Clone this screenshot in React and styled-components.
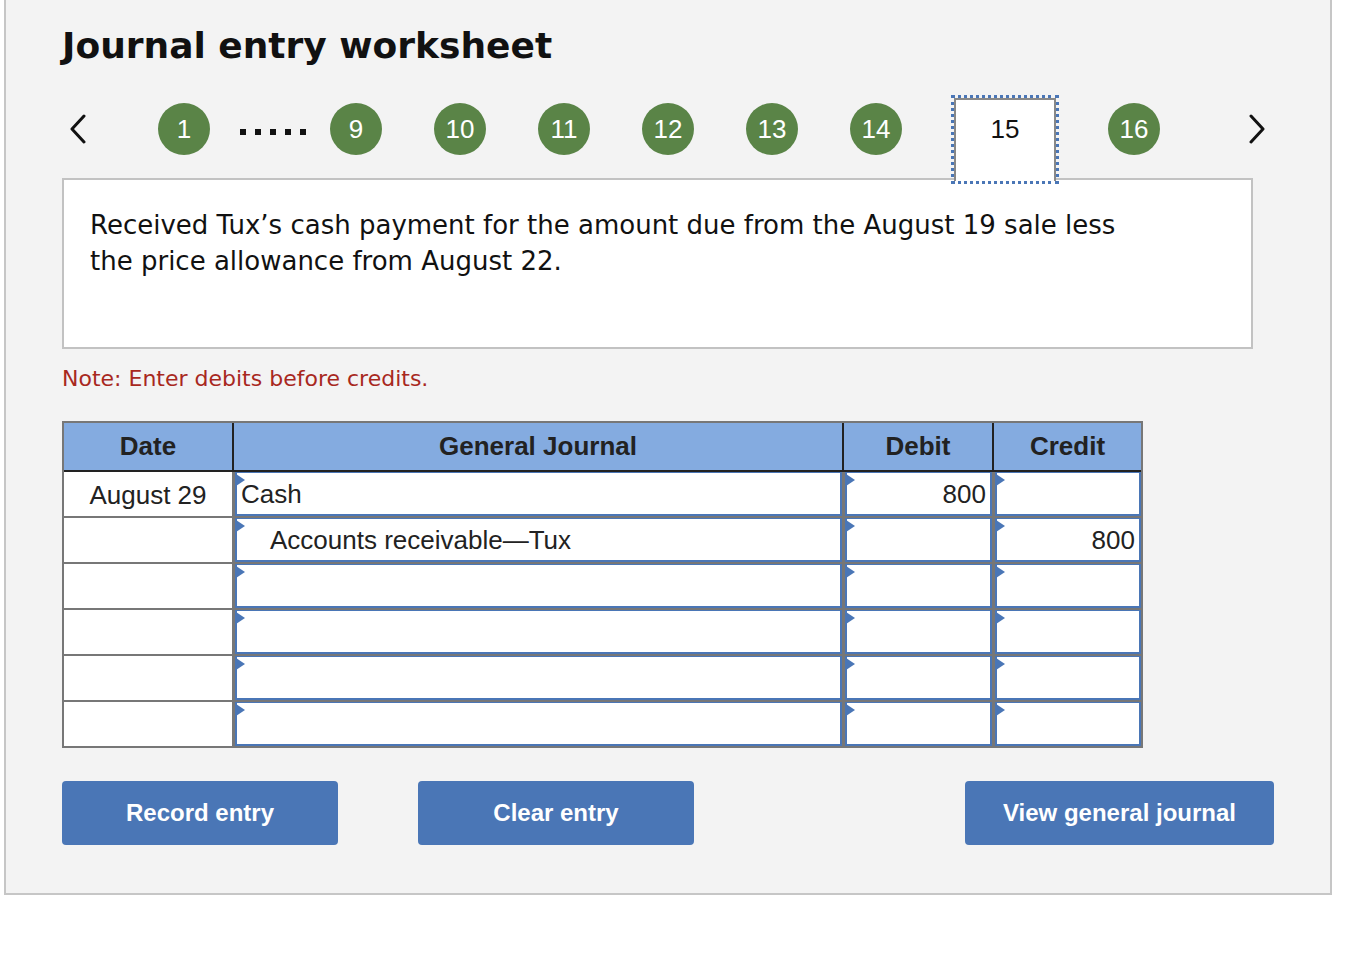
import React from "react";
import styled, { createGlobalStyle } from "styled-components";

const GlobalStyle = createGlobalStyle`
  body {
    margin: 0;
    background: #ffffff;
    font-family: "Liberation Sans", Arial, sans-serif;
  }
`;

const colors = {
  panel: "#f3f3f3",
  panelBorder: "#c6c6c6",
  green: "#5a8447",
  blue: "#4a76b6",
  header: "#84abe0",
  grid: "#777777",
  dark: "#222222",
  note: "#a8281e",
};

const Panel = styled.div`
  margin-left: 4px;
  width: 1324px;
  height: 893px;
  background: ${colors.panel};
  border: 2px solid ${colors.panelBorder};
  border-top: none;
`;

const Inner = styled.div`
  padding: 24px 0 0 56px;
`;

const Title = styled.h1`
  margin: 0;
  font-family: "DejaVu Sans", Verdana, sans-serif;
  font-weight: bold;
  font-size: 36px;
  line-height: 44px;
  color: #111;
`;

const Nav = styled.div`
  display: flex;
  align-items: flex-start;
  margin-top: 30px;
  height: 80px;
`;

const Arrow = styled.button`
  border: none;
  background: none;
  padding: 0;
  width: 24px;
  height: 52px;
  margin-top: 5px;
  margin-left: ${(p) => p.$ml || 0}px;
  display: flex;
  align-items: center;
  justify-content: center;
  cursor: pointer;
`;

const Step = styled.div`
  width: 52px;
  height: 52px;
  margin-top: 5px;
  margin-left: ${(p) => p.$ml}px;
  border-radius: 50%;
  background: ${colors.green};
  color: #fff;
  font-size: 26px;
  display: flex;
  align-items: center;
  justify-content: center;
  flex-shrink: 0;
`;

const Dots = styled.div`
  display: flex;
  gap: 9px;
  margin-left: 30px;
  margin-top: 31px;
  span {
    width: 6px;
    height: 6px;
    background: #111;
  }
`;

const ActiveTab = styled.div`
  position: relative;
  z-index: 1;
  margin-left: ${(p) => p.$ml}px;
  width: 102px;
  height: 83px;
  background: #fff;
  border: 2px solid #888;
  border-bottom: none;
  outline: 3px dotted ${colors.blue};
  outline-offset: 0px;
  font-size: 26px;
  color: #111;
  display: flex;
  justify-content: center;
  padding-top: 14px;
  box-sizing: border-box;
`;

const Prompt = styled.div`
  box-sizing: border-box;
  width: 1191px;
  height: 171px;
  background: #fff;
  border: 2px solid #c2c2c2;
  padding: 27px 26px 0 26px;
  font-family: "DejaVu Sans", Verdana, sans-serif;
  font-size: 26px;
  line-height: 36px;
  color: #111;
`;

const Note = styled.p`
  margin: 16px 0 0;
  font-family: "DejaVu Sans", Verdana, sans-serif;
  font-size: 22px;
  line-height: 28px;
  color: ${colors.note};
`;

const Sheet = styled.div`
  margin-top: 28px;
  width: 1077px;
  border: 2px solid ${colors.grid};
  background: ${colors.grid};
`;

const cols = "168px 608px 148px 147px";

const HeadRow = styled.div`
  display: grid;
  grid-template-columns: ${cols};
  column-gap: 2px;
  background: ${colors.dark};
  border-bottom: 2px solid ${colors.dark};
`;

const HeadCell = styled.div`
  height: 47px;
  background: ${colors.header};
  display: flex;
  align-items: center;
  justify-content: center;
  font-weight: bold;
  font-size: 26px;
  color: ${colors.dark};
`;

const Row = styled.div`
  display: grid;
  grid-template-columns: ${cols};
  column-gap: 2px;
  & + & {
    margin-top: 2px;
  }
`;

const DateCell = styled.div`
  height: 44px;
  background: #fff;
  display: flex;
  align-items: center;
  justify-content: center;
  padding-top: 2px;
  box-sizing: border-box;
  font-size: 26px;
  color: ${colors.dark};
`;

const Entry = styled.div`
  position: relative;
  height: 44px;
  box-sizing: border-box;
  background: #fff;
  border: 2px solid ${colors.blue};
  border-top-width: 1px;
  margin-left: 1px;
  display: flex;
  align-items: center;
  justify-content: ${(p) => (p.$num ? "flex-end" : "flex-start")};
  padding: 2px ${(p) => (p.$num ? 4 : 0)}px 0 ${(p) => (p.$num ? 0 : p.$indent ? 33 : 4)}px;
  font-size: 26px;
  color: ${colors.dark};
`;

const Flag = styled.span`
  position: absolute;
  top: 1px;
  left: -1px;
  width: 0;
  height: 0;
  border-left: 9px solid ${colors.blue};
  border-top: 6px solid transparent;
  border-bottom: 6px solid transparent;
`;

const Actions = styled.div`
  display: flex;
  margin-top: 33px;
`;

const Button = styled.button`
  width: ${(p) => p.$w}px;
  height: 64px;
  margin-left: ${(p) => p.$ml || 0}px;
  border: none;
  border-radius: 4px;
  background: ${colors.blue};
  color: #fff;
  font-family: "Liberation Sans", Arial, sans-serif;
  font-weight: bold;
  font-size: 24px;
  cursor: pointer;
`;

const Chevron = ({ dir }) => (
  <svg width="18" height="30" viewBox="0 0 18 30" fill="none">
    <path
      d={dir === "left" ? "M15 2 L3 15 L15 28" : "M3 2 L15 15 L3 28"}
      stroke="#111"
      strokeWidth="3"
      strokeLinecap="round"
      strokeLinejoin="round"
    />
  </svg>
);

const rows = [
  { date: "August 29", account: "Cash", debit: "800", credit: "" },
  { date: "", account: "Accounts receivable\u2014Tux", indent: true, debit: "", credit: "800" },
  { date: "", account: "", debit: "", credit: "" },
  { date: "", account: "", debit: "", credit: "" },
  { date: "", account: "", debit: "", credit: "" },
  { date: "", account: "", debit: "", credit: "" },
];

export default function App() {
  return (
    <>
      <GlobalStyle />
      <Panel>
        <Inner>
          <Title>Journal entry worksheet</Title>
          <Nav>
            <Arrow $ml={4} aria-label="previous">
              <Chevron dir="left" />
            </Arrow>
            <Step $ml={68}>1</Step>
            <Dots>
              <span />
              <span />
              <span />
              <span />
              <span />
            </Dots>
            <Step $ml={24}>9</Step>
            <Step $ml={52}>10</Step>
            <Step $ml={52}>11</Step>
            <Step $ml={52}>12</Step>
            <Step $ml={52}>13</Step>
            <Step $ml={52}>14</Step>
            <ActiveTab $ml={52}>15</ActiveTab>
            <Step $ml={52}>16</Step>
            <Arrow $ml={85} aria-label="next">
              <Chevron dir="right" />
            </Arrow>
          </Nav>
          <Prompt>
            Received Tux’s cash payment for the amount due from the August 19 sale less
            <br />
            the price allowance from August 22.
          </Prompt>
          <Note>Note: Enter debits before credits.</Note>
          <Sheet>
            <HeadRow>
              <HeadCell>Date</HeadCell>
              <HeadCell>General Journal</HeadCell>
              <HeadCell>Debit</HeadCell>
              <HeadCell>Credit</HeadCell>
            </HeadRow>
            {rows.map((r, i) => (
              <Row key={i}>
                <DateCell>{r.date}</DateCell>
                <Entry $indent={r.indent}>
                  <Flag />
                  {r.account}
                </Entry>
                <Entry $num>
                  <Flag />
                  {r.debit}
                </Entry>
                <Entry $num>
                  <Flag />
                  {r.credit}
                </Entry>
              </Row>
            ))}
          </Sheet>
          <Actions>
            <Button $w={276}>Record entry</Button>
            <Button $w={276} $ml={80}>Clear entry</Button>
            <Button $w={309} $ml={271}>View general journal</Button>
          </Actions>
        </Inner>
      </Panel>
    </>
  );
}
